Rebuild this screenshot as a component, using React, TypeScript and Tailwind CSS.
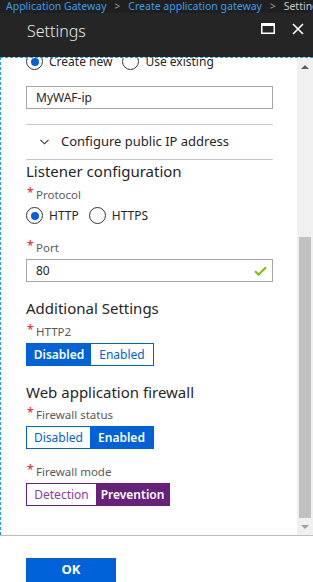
import React from 'react';

const font = { fontFamily: '"Segoe UI", "Noto Sans", sans-serif' };

const Radio: React.FC<{ label: string; checked?: boolean }> = ({ label, checked }) => (
  <label className="flex items-center gap-[6px] h-[17px] text-[12px] leading-[17px] text-[#262626]">
    <span className="w-[17px] h-[17px] rounded-full border border-[#333] bg-white flex items-center justify-center">
      {checked && <span className="w-[8px] h-[8px] rounded-full bg-[#0062d9]" />}
    </span>
    {label}
  </label>
);

const FieldLabel: React.FC<{ text: string; className?: string }> = ({ text, className }) => (
  <div className={`flex items-center h-[16px] text-[11.5px] leading-[16px] text-[#5a5a5a] ${className ?? ''}`}>
    <span className="text-[#e81123] text-[12px] w-[10px] -mt-[4px] pl-[1px]">*</span>
    <span>{text}</span>
  </div>
);

interface ToggleProps {
  options: { label: string; width: number }[];
  selected: number;
  color: 'blue' | 'purple';
  className?: string;
}

const Toggle: React.FC<ToggleProps> = ({ options, selected, color, className }) => {
  const border = color === 'blue' ? 'border-[#0062d9]' : 'border-[#68217a]';
  return (
    <div className={`flex h-[23px] w-fit border ${border} ${className ?? ''}`}>
      {options.map((o, i) => {
        const on = i === selected;
        const cls = on
          ? color === 'blue'
            ? 'bg-[#0062d9] text-white font-semibold'
            : 'bg-[#68217a] text-white font-semibold'
          : color === 'blue'
            ? 'bg-white text-[#0062d9]'
            : 'bg-white text-[#8b3c9e]';
        return (
          <div
            key={o.label}
            className={`flex items-center justify-center text-[12px] leading-[21px] ${cls}`}
            style={{ width: o.width }}
          >
            {o.label}
          </div>
        );
      })}
    </div>
  );
};

const App: React.FC = () => {
  return (
    <div className="w-[313px] h-[582px] bg-white flex flex-col overflow-hidden" style={font}>
      {/* breadcrumb */}
      <div className="h-[13px] bg-[#1f1f1f] flex items-start gap-[8px] pl-[6px] text-[10.5px] leading-[12px] whitespace-nowrap overflow-hidden">
        <span className="text-[#3e9be8]">Application Gateway</span>
        <span className="text-[#9a9a9a] text-[10px]">&gt;</span>
        <span className="text-[#3e9be8]">Create application gateway</span>
        <span className="text-[#9a9a9a] text-[10px]">&gt;</span>
        <span className="text-[#c8c8c8]">Settings</span>
      </div>

      {/* header */}
      <div className="h-[44px] bg-[#252525] flex items-start pl-[27px] pr-[9px] pt-[7px]">
        <span className="text-[16px] leading-[22px] text-[#e6e6e6] font-light flex-1">Settings</span>
        <svg width="14" height="11" viewBox="0 0 14 11" className="mt-[3px] mr-[17px]">
          <rect x="0.75" y="0.75" width="12.5" height="9.5" fill="none" stroke="#fff" strokeWidth="1.5" />
          <rect x="0" y="0" width="14" height="3" fill="#fff" />
        </svg>
        <svg width="12" height="12" viewBox="0 0 12 12" className="mt-[3px]">
          <path d="M1 1L11 11M11 1L1 11" stroke="#fff" strokeWidth="1.6" />
        </svg>
      </div>

      {/* content */}
      <div className="h-[478px] flex border-t border-l border-dashed border-[#1ba1e2] overflow-hidden">
        <div className="flex-1 overflow-hidden pl-[25px] pr-[24px]">
          <div className="-mt-[5px] flex flex-col">
            <div className="flex items-center gap-[10px]">
              <Radio label="Create new" checked />
              <Radio label="Use existing" />
            </div>

            <div className="mt-[16px] h-[23px] border border-[#a6a6a6] flex items-center pl-[9px] text-[12px] text-[#262626]">
              MyWAF-ip
            </div>

            <div className="mt-[15px] h-px bg-[#c8c8c8]" />
            <div className="h-[34px] flex items-center pl-[14px] text-[13px] text-[#262626]">
              <svg width="9" height="6" viewBox="0 0 9 6" className="mr-[12px]">
                <path d="M0.5 0.8L4.5 4.8L8.5 0.8" fill="none" stroke="#333" strokeWidth="1.1" />
              </svg>
              Configure public IP address
            </div>
            <div className="h-px bg-[#c8c8c8]" />

            <div className="mt-[1px] h-[20px] flex items-center text-[15px] leading-[20px] text-[#262626]">
              Listener configuration
            </div>
            <FieldLabel text="Protocol" className="mt-[6px]" />
            <div className="mt-[4px] flex items-center gap-[10px]">
              <Radio label="HTTP" checked />
              <Radio label="HTTPS" />
            </div>

            <FieldLabel text="Port" className="mt-[16px]" />
            <div className="mt-[3px] h-[23px] border border-[#a6a6a6] flex items-center pl-[9px] pr-[5px] text-[12px] text-[#262626]">
              <span className="flex-1">80</span>
              <svg width="13" height="10" viewBox="0 0 13 10">
                <path d="M1 5.2L4.6 8.6L12 1.2" fill="none" stroke="#7fba00" strokeWidth="2" />
              </svg>
            </div>

            <div className="mt-[16px] h-[20px] flex items-center text-[15px] leading-[20px] text-[#262626]">
              Additional Settings
            </div>
            <FieldLabel text="HTTP2" className="mt-[6px]" />
            <Toggle
              className="mt-[3px]"
              color="blue"
              selected={0}
              options={[
                { label: 'Disabled', width: 64 },
                { label: 'Enabled', width: 62 },
              ]}
            />

            <div className="mt-[16px] h-[20px] flex items-center text-[15px] leading-[20px] text-[#262626]">
              Web application firewall
            </div>
            <FieldLabel text="Firewall status" className="mt-[5px]" />
            <Toggle
              className="mt-[3px]"
              color="blue"
              selected={1}
              options={[
                { label: 'Disabled', width: 63 },
                { label: 'Enabled', width: 63 },
              ]}
            />

            <FieldLabel text="Firewall mode" className="mt-[15px]" />
            <Toggle
              className="mt-[3px]"
              color="purple"
              selected={1}
              options={[
                { label: 'Detection', width: 69 },
                { label: 'Prevention', width: 73 },
              ]}
            />
          </div>
        </div>

        {/* scrollbar */}
        <div className="w-[16px] bg-[#f0f0f0] flex flex-col items-center">
          <div className="h-[17px] flex items-center justify-center">
            <span className="w-0 h-0 border-l-[4px] border-r-[4px] border-b-[4px] border-l-transparent border-r-transparent border-b-[#606060]" />
          </div>
          <div className="h-[162px]" />
          <div className="w-[12px] flex-1 bg-[#c1c1c1]" />
          <div className="h-[17px] flex items-center justify-center">
            <span className="w-0 h-0 border-l-[4px] border-r-[4px] border-t-[4px] border-l-transparent border-r-transparent border-t-[#a0a0a0]" />
          </div>
        </div>
      </div>

      {/* footer */}
      <div className="flex-1 border-t border-[#bdbdbd] pl-[26px] pt-[20px]">
        <button className="w-[90px] h-[24px] bg-[#0062d9] text-white text-[13px] font-bold">OK</button>
      </div>
    </div>
  );
};

export default App;
